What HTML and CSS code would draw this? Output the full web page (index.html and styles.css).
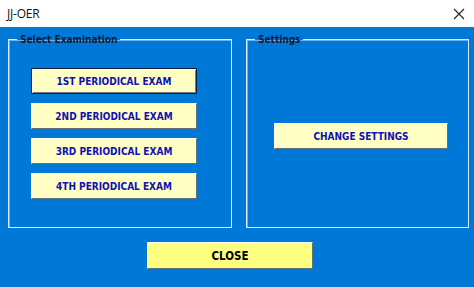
FILE: index.html
```html
<!DOCTYPE html>
<html>
<head>
<meta charset="utf-8">
<link rel="stylesheet" href="styles.css">
</head>
<body>
<div class="window">
  <div class="titlebar">
    <span class="title">JJ-OER</span>
    <svg class="x-icon" width="12" height="12" viewBox="0 0 12 12"><path d="M1 1 L11 11 M11 1 L1 11" stroke="#222" stroke-width="1.1" fill="none"/></svg>
  </div>
  <div class="client">
    <div class="frames">
      <fieldset class="frame exam">
        <legend>Select Examination</legend>
        <div class="exam-list">
          <button class="btn focused">1ST PERIODICAL EXAM</button>
          <button class="btn">2ND PERIODICAL EXAM</button>
          <button class="btn">3RD PERIODICAL EXAM</button>
          <button class="btn">4TH PERIODICAL EXAM</button>
        </div>
      </fieldset>
      <fieldset class="frame settings">
        <legend>Settings</legend>
        <button class="btn wide">CHANGE SETTINGS</button>
      </fieldset>
    </div>
    <button class="btn close">CLOSE</button>
  </div>
</div>
</body>
</html>
```

FILE: styles.css
```css
html, body {
  margin: 0;
  padding: 0;
}
body {
  width: 474px;
  height: 287px;
  overflow: hidden;
  background: #0078d7;
  font-family: "DejaVu Sans", sans-serif;
}
.window {
  width: 474px;
  height: 287px;
  display: flex;
  flex-direction: column;
}
.titlebar {
  height: 27px;
  background: #ffffff;
  display: flex;
  align-items: center;
  justify-content: space-between;
  padding: 0 9px 0 7px;
  box-sizing: border-box;
}
.title {
  font-family: "Open Sans", "Noto Sans", sans-serif;
  font-size: 12px;
  color: #111;
  letter-spacing: -0.2px;
}
.x-icon {
  display: block;
}
.client {
  flex: 1;
  background: #0078d7;
  padding: 6px 5px 0 8px;
  box-sizing: border-box;
}
.frames {
  display: flex;
  gap: 14px;
}
.frame {
  margin: 0;
  padding: 0;
  min-width: 0;
  border: 1px solid #dde9f7;
  box-shadow: inset 1px 1px 0 #6fb0ea;
  height: 195px;
  box-sizing: border-box;
}
.frame legend {
  margin-left: 8px;
  padding: 0 3px;
  font-family: "DejaVu Sans", sans-serif;
  font-stretch: condensed;
  font-size: 10px;
  line-height: 13px;
  font-weight: bold;
  color: #0a1a3a;
}
.exam {
  width: 224px;
}
.settings {
  width: 223px;
}
.exam-list {
  display: flex;
  flex-direction: column;
  gap: 9px;
  padding: 22px 0 0 22px;
}
.btn {
  display: block;
  width: 166px;
  height: 26px;
  margin: 0;
  padding: 0;
  background: #ffffc4;
  border: 1px solid;
  border-color: #ffffff #5f6f80 #5f6f80 #ffffff;
  font-family: "DejaVu Sans", sans-serif;
  font-stretch: condensed;
  font-size: 10px;
  font-weight: bold;
  color: #1010b8;
  text-align: center;
}
.btn.focused {
  border-color: #0d1e44;
  box-shadow: inset 1px 1px 0 #ffffff, inset -1px -1px 0 #7a7a7a;
}
.btn.wide {
  width: 174px;
  margin: 77px 0 0 27px;
}
.btn.close {
  width: 166px;
  height: 27px;
  margin: 14px 0 0 139px;
  background: #ffff80;
  color: #000;
  font-size: 11.5px;
}
```
